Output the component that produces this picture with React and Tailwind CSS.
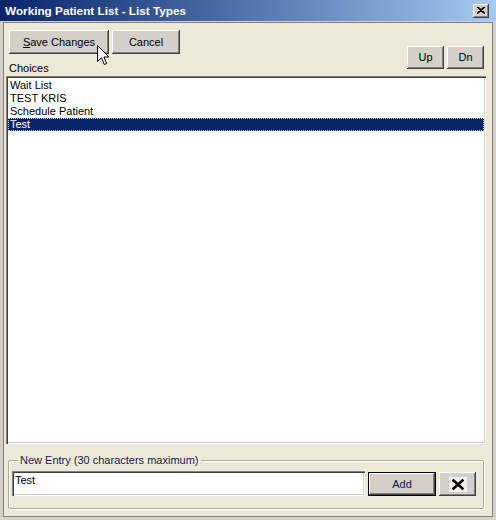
import React from 'react';

const raised =
  'bg-[#d4d0c8] shadow-[inset_-1px_-1px_0_#404040,inset_1px_1px_0_#ffffff,inset_-2px_-2px_0_#808080,inset_2px_2px_0_#d4d0c8]';
const sunken =
  'shadow-[inset_1px_1px_0_#808080,inset_2px_2px_0_#404040,inset_-1px_-1px_0_#ffffff,inset_-2px_-2px_0_#d4d0c8]';

const choices = ['Wait List', 'TEST KRIS', 'Schedule Patient', 'Test'];

const Button = ({ className = '', children }) => (
  <button className={`${raised} flex items-center justify-center text-[11px] text-black leading-none ${className}`}>
    {children}
  </button>
);

const Cursor = () => (
  <svg className="absolute left-[97px] top-[45px]" width="13" height="21" viewBox="0 0 13 21">
    <path
      d="M0.5 0.5 L0.5 16.5 L4.5 12.8 L7.3 19.5 L9.6 18.5 L6.9 12 L11.8 12 Z"
      fill="#ffffff"
      stroke="#000000"
      strokeWidth="1"
      strokeLinejoin="miter"
    />
  </svg>
);

const App = () => {
  const selected = 3;

  return (
    <div className="relative w-[496px] h-[520px] bg-[#d4d0c8] flex flex-col overflow-hidden font-['Liberation_Sans',Arial,sans-serif] text-[11px] text-black">
      {/* Title bar */}
      <div className="h-[21px] shrink-0 flex items-center justify-between pl-[5px] pr-[7px] bg-gradient-to-r from-[#0a246a] to-[#a6caf0]">
        <span className="text-white font-bold text-[11.75px]">Working Patient List - List Types</span>
        <div className={`${raised} w-[16px] h-[14px] flex items-center justify-center`}>
          <svg width="8" height="7" viewBox="0 0 8 7">
            <path d="M0 0 L8 7 M8 0 L0 7 M1 0 L8 6.2 M7 0 L0 6.2" stroke="#000" strokeWidth="1.2" />
          </svg>
        </div>
      </div>

      {/* Window body */}
      <div className="flex-1 flex flex-col ml-[3px] mr-[3px] mt-[1px] mb-[3px] border border-[#808080] bg-[#ece9d8]">
        <div className="flex items-end justify-between pl-[2px] pr-[8px]">
          <div className="flex flex-col">
            <div className="flex gap-[3px] mt-[7px] ml-[3px]">
              <Button className="w-[100px] h-[24px]">
                <span><u>S</u>ave Changes</span>
              </Button>
              <Button className="w-[68px] h-[24px]">Cancel</Button>
            </div>
            <div className="ml-[3px] mt-[7px] h-[15px] leading-[15px]">Choices</div>
          </div>
          <div className="flex gap-[3px] mb-[7px]">
            <Button className="w-[37px] h-[23px]">Up</Button>
            <Button className="w-[37px] h-[23px]">Dn</Button>
          </div>
        </div>

        {/* List */}
        <div className={`${sunken} bg-white ml-[2px] mr-[6px] flex-1 p-[2px] pt-[3px]`}>
          {choices.map((c, i) => (
            <div
              key={c}
              className={
                i === selected
                  ? 'h-[13px] leading-[11px] pl-[1px] bg-[#0a246a] text-white border border-dotted border-[#c8cfe0]'
                  : 'h-[13px] leading-[13px] pl-[2px]'
              }
            >
              {c}
            </div>
          ))}
        </div>

        {/* New entry group */}
        <fieldset className="mt-[10px] mb-[7px] ml-[4px] mr-[8px] h-[55px] border border-[#aca899] rounded-[2px] px-[3px] shadow-[inset_1px_1px_0_#ffffff,1px_1px_0_#ffffff]">
          <legend className="ml-[6px] px-[2px] leading-[13px] text-[#15154f]">New Entry (30 characters maximum)</legend>
          <div className="flex items-start gap-[3px] mt-[4px]">
            <div className={`${sunken} bg-white w-[353px] h-[25px] pl-[3px] pt-[3px] leading-[13px]`}>Test</div>
            <button className="mt-[1px] w-[68px] h-[24px] border border-black flex">
              <span className={`${raised} flex-1 flex items-center justify-center text-[11px] text-[#15154f]`}>Add</span>
            </button>
            <Button className="mt-[1px] w-[37px] h-[24px]">
              <span className="w-[18px] h-[15px] bg-[#f0f0f0] flex items-center justify-center">
                <svg width="12" height="11" viewBox="0 0 12 11">
                  <path d="M1.5 1.5 L10.5 9.5 M10.5 1.5 L1.5 9.5" stroke="#000" strokeWidth="2.6" strokeLinecap="square" />
                </svg>
              </span>
            </Button>
          </div>
        </fieldset>
      </div>

      <Cursor />
    </div>
  );
};

export default App;
